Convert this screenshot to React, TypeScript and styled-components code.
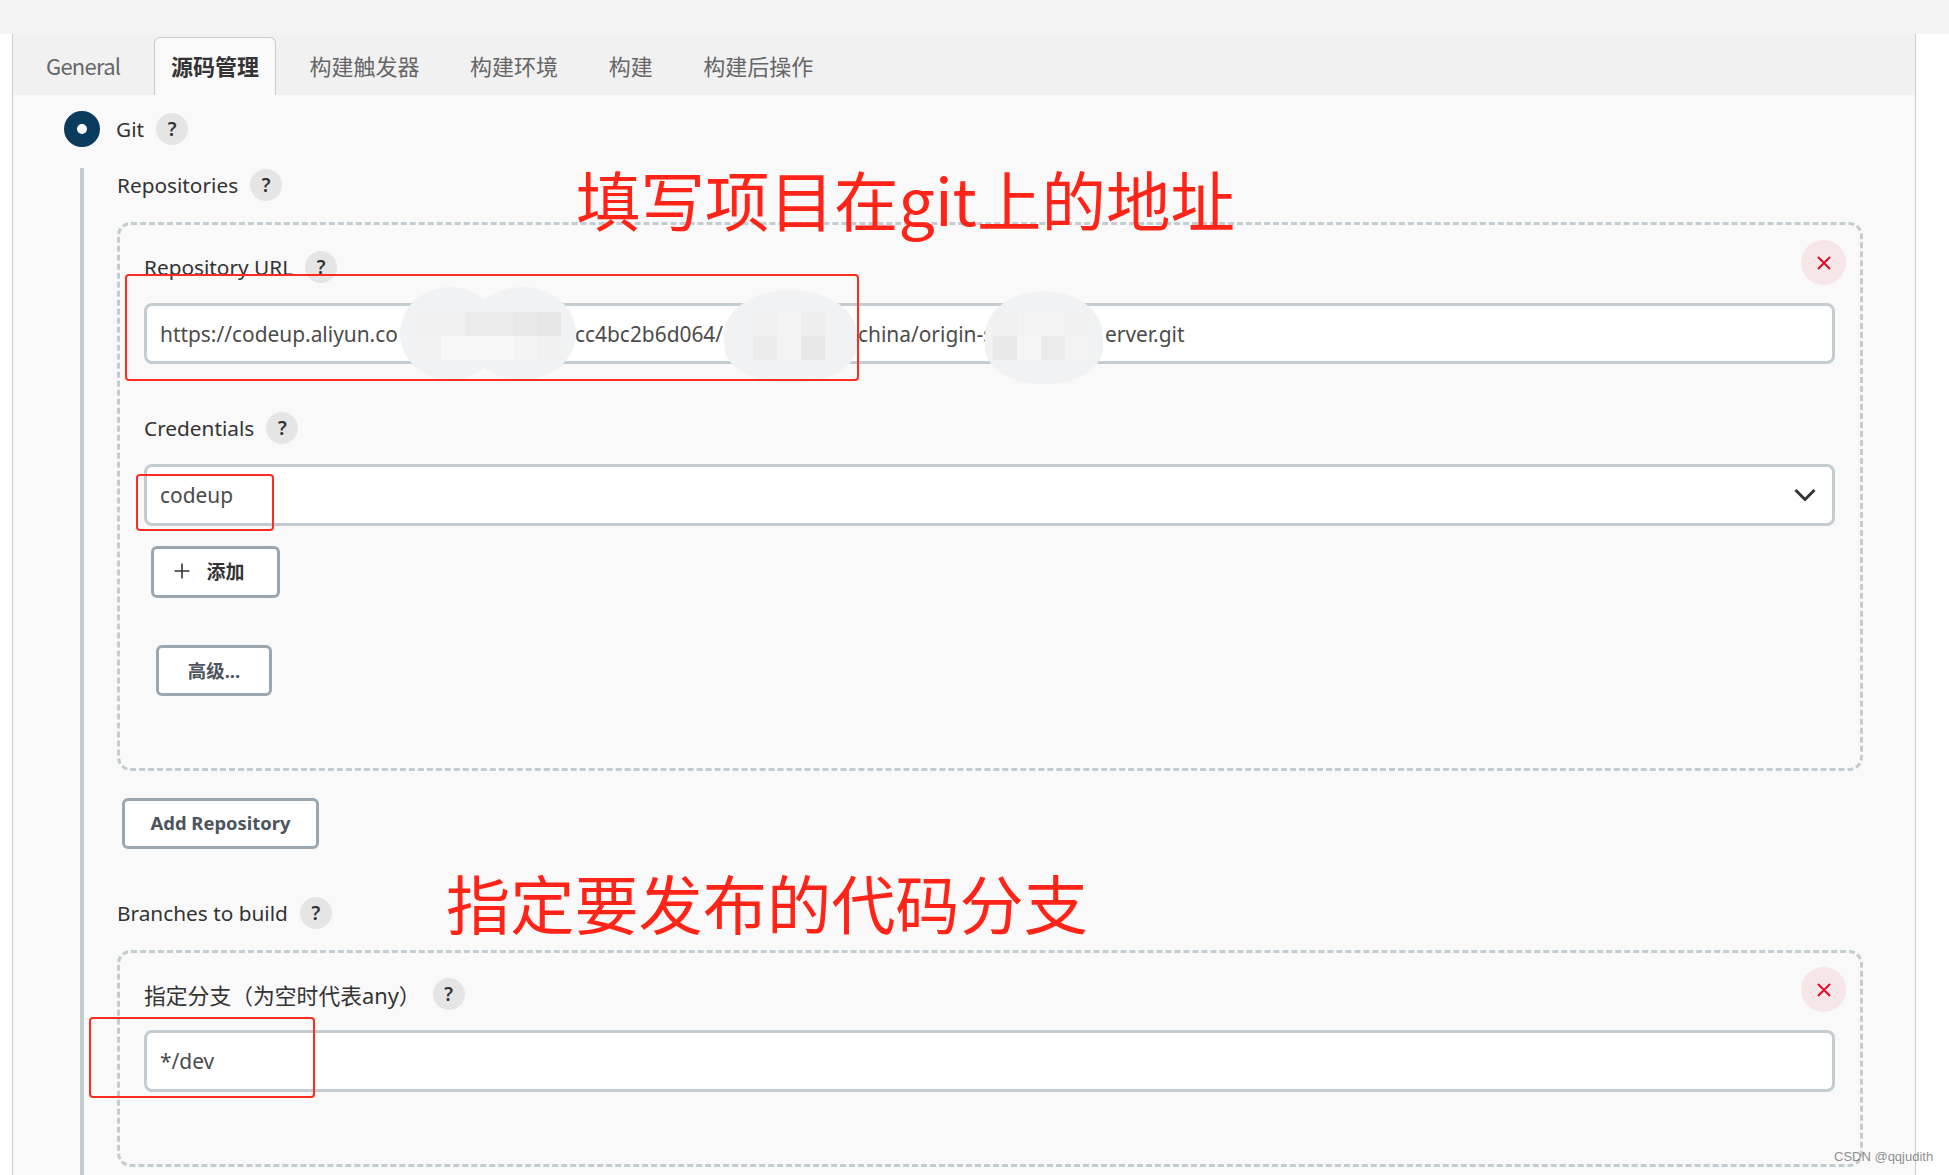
import styled, { createGlobalStyle } from 'styled-components';

const GlobalStyle = createGlobalStyle`
  html, body {
    margin: 0;
    padding: 0;
    background: #fff;
  }

  * {
    box-sizing: border-box;
  }
`;

const FONT = `"Noto Sans", "Noto Sans CJK SC", sans-serif`;
const CJK = `"Noto Sans CJK SC", "Noto Sans", sans-serif`;

const Page = styled.div`
  width: 1949px;
  height: 1175px;

  position: relative;
  overflow: hidden;

  font-family: ${FONT};
  color: #333;
`;

const TopStrip = styled.div`
  height: 34px;
  background: #f3f3f3;
`;

const Panel = styled.div`
  height: 1141px;
  margin: 0 33px 0 12px;

  background: #f9f9f9;
  border-left: 1px solid #c3ccd1;
  border-right: 1px solid #c3ccd1;
`;

const TabBar = styled.div`
  height: 61px;
  padding-left: 16px;

  display: flex;
  align-items: flex-end;
  gap: 16.6px;

  background: #f1f1f2;
`;

const Tab = styled.div<{ $active?: boolean; $latin?: boolean }>`
  height: 58px;
  padding: 0 16px 3px;

  display: flex;
  align-items: center;

  font-family: ${CJK};
  font-size: 22px;
  font-weight: ${(p) => (p.$active ? 700 : 400)};
  letter-spacing: ${(p) => (p.$latin ? '-0.75px' : '0')};
  color: ${(p) => (p.$active ? '#333' : '#666')};

  background: ${(p) => (p.$active ? '#f9f9f9' : 'transparent')};
  border: 1px solid ${(p) => (p.$active ? '#c3ccd1' : 'transparent')};
  border-bottom: none;
  border-radius: 6px 6px 0 0;
`;

const Content = styled.div`
  padding: 16px 52px 0 51px;
`;

const GitRow = styled.div`
  height: 35px;

  display: flex;
  align-items: center;
`;

const Radio = styled.div`
  width: 36px;
  height: 36px;
  margin-right: 16px;

  background: #fff;
  border: 13px solid #0b3c5d;
  border-radius: 50%;
`;

const Tree = styled.div`
  margin: 22px 0 0 16px;
  padding: 1px 0 0 33px;
  height: 1100px;

  border-left: 4px solid #c3ccd1;
`;

const LabelRow = styled.div<{ $top?: number }>`
  height: 32px;
  margin-top: ${(p) => p.$top ?? 0}px;

  display: flex;
  align-items: center;
  gap: 12px;
`;

const Label = styled.span<{ $cjk?: boolean }>`
  font-size: ${(p) => (p.$cjk ? '21.8px' : '20.8px')};
  white-space: nowrap;
  color: #333;
`;

const GitName = styled(Label)`
  margin-right: 12px;
`;

const Help = styled.span`
  width: 32px;
  height: 32px;

  display: flex;
  align-items: center;
  justify-content: center;

  font-size: 19px;
  font-weight: 600;
  color: #333;

  background: #e5e5e5;
  border-radius: 50%;
`;

const Chunk = styled.div<{ $height: number; $pad: number }>`
  height: ${(p) => p.$height}px;
  margin-top: 21px;
  padding: ${(p) => p.$pad}px 25px 0 24px;

  position: relative;

  border: 3px dashed #c3ccd1;
  border-radius: 14px;
`;

const CloseButton = styled.div<{ $top: number }>`
  width: 45px;
  height: 45px;

  position: absolute;
  top: ${(p) => p.$top}px;
  right: 14px;

  display: flex;
  align-items: center;
  justify-content: center;

  background: #f6e6e8;
  border-radius: 50%;
`;

const Field = styled.div<{ $height?: number }>`
  height: ${(p) => p.$height ?? 62}px;
  margin-top: 20px;
  padding: 0 16px 0 13px;

  display: flex;
  align-items: center;
  justify-content: space-between;

  font-size: 20.9px;
  color: #4b4b4b;

  background: #fff;
  border: 3px solid #c3ccd1;
  border-radius: 8px;
`;

const UrlPart = styled.span<{ $width?: number }>`
  flex: none;
  width: ${(p) => (p.$width ? `${p.$width}px` : 'auto')};
  white-space: nowrap;
`;

const UrlLine = styled.div`
  display: flex;
`;

const Button = styled.div<{ $width: number; $height: number; $top: number; $left: number }>`
  width: ${(p) => p.$width}px;
  height: ${(p) => p.$height}px;
  margin: ${(p) => p.$top}px 0 0 ${(p) => p.$left}px;
  padding-bottom: 2px;

  display: flex;
  align-items: center;
  justify-content: center;
  gap: 16px;

  font-family: ${FONT};
  font-size: 18.4px;
  font-weight: 700;
  color: #4d545d;

  background: #fff;
  border: 3px solid #9aa7b0;
  border-radius: 6px;
`;

const AddButton = styled(Button)`
  padding-right: 12px;
  font-size: 19px;
  color: #333;
`;

const Note = styled.div<{ $left: number; $top: number; $size: number }>`
  position: absolute;
  left: ${(p) => p.$left}px;
  top: ${(p) => p.$top}px;

  font-family: ${CJK};
  font-size: ${(p) => p.$size}px;
  line-height: 1;
  white-space: nowrap;
  color: #ff2417;
`;

const RedBox = styled.div<{ $left: number; $top: number; $width: number; $height: number }>`
  position: absolute;
  left: ${(p) => p.$left}px;
  top: ${(p) => p.$top}px;
  width: ${(p) => p.$width}px;
  height: ${(p) => p.$height}px;

  border: 2px solid #ff2a20;
  border-radius: 4px;
`;

const Blur = styled.div<{ $left: number; $top: number; $width: number; $height: number; $square?: boolean }>`
  position: absolute;
  left: ${(p) => p.$left}px;
  top: ${(p) => p.$top}px;
  width: ${(p) => p.$width}px;
  height: ${(p) => p.$height}px;

  background: #f1f2f4;
  border-radius: ${(p) => (p.$square ? '50% 50% 46% 46% / 48% 48% 40% 40%' : '50%')};
`;

const Mosaic = styled.div<{ $left: number; $columns: number }>`
  position: absolute;
  left: ${(p) => p.$left}px;
  top: 312px;

  display: grid;
  grid-template-columns: repeat(${(p) => p.$columns}, 24px);
  grid-auto-rows: 24px;
`;

const Cell = styled.div<{ $shade: string }>`
  background: ${(p) => p.$shade};
`;

const Watermark = styled.div`
  position: absolute;
  left: 1834px;
  top: 1149px;

  font-family: "Liberation Sans", sans-serif;
  font-size: 13px;
  line-height: 16px;
  color: rgba(90, 90, 90, 0.7);
`;

function CloseIcon() {
  return (
    <svg width="16" height="16" viewBox="0 0 16 16" fill="none" stroke="#e6001f" strokeWidth="1.8">
      <path d="M2 2 L14 14 M14 2 L2 14" />
    </svg>
  );
}

function ChevronIcon() {
  return (
    <svg width="22" height="14" viewBox="0 0 22 14" fill="none" stroke="#333" strokeWidth="3">
      <path d="M1.5 2 L11 11.5 L20.5 2" />
    </svg>
  );
}

function PlusIcon() {
  return (
    <svg width="16" height="16" viewBox="0 0 16 16" fill="none" stroke="#333" strokeWidth="1.6">
      <path d="M8 0.5 V15.5 M0.5 8 H15.5" />
    </svg>
  );
}

const tabs = ['General', '源码管理', '构建触发器', '构建环境', '构建', '构建后操作'];

const mosaics = [
  {
    left: 417,
    columns: 6,
    cells: ['#f0f0f1', '#f0f0f0', '#ececec', '#ececec', '#e9e9e9', '#e6e6e6', '#f2f2f3', '#f8f8f8', '#f8f8f8', '#f8f8f8', '#f4f4f4', '#f1f1f1'],
  },
  {
    left: 753,
    columns: 3,
    cells: ['#f0f0f0', '#f4f4f4', '#eeeeee', '#ebebeb', '#f3f3f3', '#e8e8e8'],
  },
  {
    left: 993,
    columns: 4,
    cells: ['#f0f0f0', '#f3f3f3', '#f3f3f3', '#f1f1f1', '#e9e9e9', '#f5f5f5', '#ebebeb', '#f3f3f3'],
  },
];

export default function App() {
  return (
    <Page>
      <GlobalStyle />
      <TopStrip />
      <Panel>
        <TabBar>
          {tabs.map((tab, i) => (
            <Tab key={tab} $active={i === 1} $latin={i === 0}>
              {tab}
            </Tab>
          ))}
        </TabBar>
        <Content>
          <GitRow>
            <Radio />
            <GitName>Git</GitName>
            <Help>?</Help>
          </GitRow>
          <Tree>
            <LabelRow>
              <Label>Repositories</Label>
              <Help>?</Help>
            </LabelRow>
            <Chunk $height={549} $pad={26}>
              <CloseButton $top={15}>
                <CloseIcon />
              </CloseButton>
              <LabelRow>
                <Label>Repository URL</Label>
                <Help>?</Help>
              </LabelRow>
              <Field $height={61}>
                <UrlLine>
                  <UrlPart $width={415}>https://codeup.aliyun.co</UrlPart>
                  <UrlPart $width={283}>cc4bc2b6d064/c</UrlPart>
                  <UrlPart $width={247}>china/origin-s</UrlPart>
                  <UrlPart>erver.git</UrlPart>
                </UrlLine>
              </Field>
              <LabelRow $top={48}>
                <Label>Credentials</Label>
                <Help>?</Help>
              </LabelRow>
              <Field>
                codeup
                <ChevronIcon />
              </Field>
              <AddButton $width={129} $height={52} $top={20} $left={7}>
                <PlusIcon />
                添加
              </AddButton>
              <Button $width={116} $height={51} $top={47} $left={12}>
                高级...
              </Button>
            </Chunk>
            <Button $width={197} $height={51} $top={27} $left={5}>
              Add Repository
            </Button>
            <LabelRow $top={48}>
              <Label>Branches to build</Label>
              <Help>?</Help>
            </LabelRow>
            <Chunk $height={217} $pad={25}>
              <CloseButton $top={14}>
                <CloseIcon />
              </CloseButton>
              <LabelRow>
                <Label $cjk>指定分支（为空时代表any）</Label>
                <Help>?</Help>
              </LabelRow>
              <Field>*/dev</Field>
            </Chunk>
          </Tree>
        </Content>
      </Panel>

      <Blur $left={400} $top={287} $width={100} $height={93} />
      <Blur $left={468} $top={287} $width={108} $height={93} />
      <Blur $left={724} $top={290} $width={133} $height={93} $square />
      <Blur $left={985} $top={291} $width={118} $height={93} $square />
      {mosaics.map((m) => (
        <Mosaic key={m.left} $left={m.left} $columns={m.columns}>
          {m.cells.map((shade, i) => (
            <Cell key={i} $shade={shade} />
          ))}
        </Mosaic>
      ))}

      <RedBox $left={125} $top={274} $width={734} $height={107} />
      <RedBox $left={136} $top={474} $width={138} $height={57} />
      <RedBox $left={89} $top={1017} $width={226} $height={81} />

      <Note $left={576} $top={166} $size={64.5}>填写项目在git上的地址</Note>
      <Note $left={446} $top={869} $size={64.2}>指定要发布的代码分支</Note>
      <Watermark>CSDN @qqjudith</Watermark>
    </Page>
  );
}
